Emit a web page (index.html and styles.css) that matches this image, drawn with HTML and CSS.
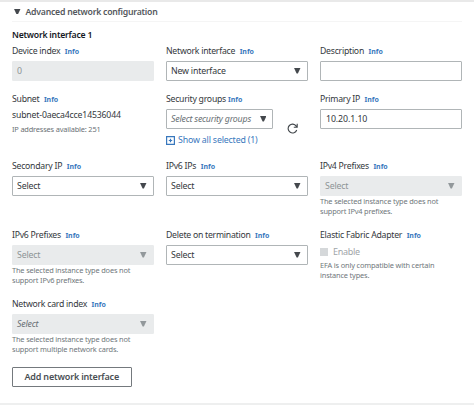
FILE: index.html
```html
<!DOCTYPE html>
<html lang="en">
<head>
<meta charset="utf-8">
<title>Advanced network configuration</title>
<link rel="stylesheet" href="styles.css">
</head>
<body>
<main class="panel">
  <header class="panel-header"><svg class="caret" viewBox="0 0 7 6"><path d="M0 0H7L4.2 6H2.8Z"/></svg><h2>Advanced network configuration</h2></header>
  <h3>Network interface 1</h3>
  <section class="grid">
    <div class="field">
      <div class="label"><span>Device index</span><a class="info">Info</a></div>
      <div class="control disabled"><span>0</span></div>
    </div>
    <div class="field">
      <div class="label"><span>Network interface</span><a class="info">Info</a></div>
      <div class="control"><span>New interface</span><svg class="caret" viewBox="0 0 7 6"><path d="M0 0H7L4.2 6H2.8Z"/></svg></div>
    </div>
    <div class="field">
      <div class="label"><span>Description</span><a class="info">Info</a></div>
      <div class="control"></div>
    </div>

    <div class="field">
      <div class="label"><span>Subnet</span><a class="info">Info</a></div>
      <div class="subnet">subnet-0aeca4cce14536044</div>
      <div class="available">IP addresses available: 251</div>
    </div>
    <div class="field">
      <div class="label tight"><span>Security groups</span><a class="info">Info</a></div>
      <div class="groups">
        <div>
          <div class="control short"><span class="placeholder">Select security groups</span><svg class="caret" viewBox="0 0 7 6"><path d="M0 0H7L4.2 6H2.8Z"/></svg></div>
          <a class="show"><svg viewBox="0 0 9 9"><path d="M.6 .6H8.4V8.4H.6ZM4.5 2.8V6.2M2.8 4.5H6.2"/></svg><span>Show all selected (1)</span></a>
        </div>
        <svg class="refresh" viewBox="0 0 11 11"><path d="M9.7 7A4.4 4.4 0 1 1 9.2 3.1L9.9 4.2M10.2 .8V4.3H6.8"/></svg>
      </div>
    </div>
    <div class="field">
      <div class="label"><span>Primary IP</span><a class="info">Info</a></div>
      <div class="control number"><span>10.20.1.10</span></div>
    </div>

    <div class="field">
      <div class="label"><span>Secondary IP</span><a class="info">Info</a></div>
      <div class="control"><span>Select</span><svg class="caret" viewBox="0 0 7 6"><path d="M0 0H7L4.2 6H2.8Z"/></svg></div>
    </div>
    <div class="field">
      <div class="label"><span>IPv6 IPs</span><a class="info">Info</a></div>
      <div class="control"><span>Select</span><svg class="caret" viewBox="0 0 7 6"><path d="M0 0H7L4.2 6H2.8Z"/></svg></div>
    </div>
    <div class="field">
      <div class="label"><span>IPv4 Prefixes</span><a class="info">Info</a></div>
      <div class="control disabled"><span>Select</span><svg class="caret" viewBox="0 0 7 6"><path d="M0 0H7L4.2 6H2.8Z"/></svg></div>
      <p class="hint">The selected instance type does not<br>support IPv4 prefixes.</p>
    </div>

    <div class="field">
      <div class="label"><span>IPv6 Prefixes</span><a class="info">Info</a></div>
      <div class="control disabled"><span>Select</span><svg class="caret" viewBox="0 0 7 6"><path d="M0 0H7L4.2 6H2.8Z"/></svg></div>
      <p class="hint">The selected instance type does not<br>support IPv6 prefixes.</p>
    </div>
    <div class="field">
      <div class="label"><span>Delete on termination</span><a class="info">Info</a></div>
      <div class="control"><span>Select</span><svg class="caret" viewBox="0 0 7 6"><path d="M0 0H7L4.2 6H2.8Z"/></svg></div>
    </div>
    <div class="field">
      <div class="label"><span>Elastic Fabric Adapter</span><a class="info">Info</a></div>
      <div class="check"><i></i><span>Enable</span></div>
      <p class="hint">EFA is only compatible with certain<br>instance types.</p>
    </div>

    <div class="field">
      <div class="label"><span>Network card index</span><a class="info">Info</a></div>
      <div class="control disabled"><span class="placeholder">Select</span><svg class="caret" viewBox="0 0 7 6"><path d="M0 0H7L4.2 6H2.8Z"/></svg></div>
      <p class="hint">The selected instance type does not<br>support multiple network cards.</p>
    </div>
  </section>
  <button class="add">Add network interface</button>
</main>
</body>
</html>
```
FILE: styles.css
```css
* { box-sizing: border-box; }
body {
  margin: 0;
  background: #fff;
  color: #34383c;
  font: 9px/14px "Noto Sans", "Open Sans", sans-serif;
}
.panel {
  height: 405px;
  padding: 0 12px;
  border-top: 2px solid #e9e9e9;
  border-bottom: 2px solid #eeefef;
}
.panel-header {
  display: flex;
  align-items: center;
  height: 20px;
  padding-left: 2px;
  border-bottom: 1px solid #f5f5f5;
}
h2, h3 { margin: 0; white-space: nowrap; font-weight: 600; }
h2 { margin-left: 5px; font-size: 8.7px; letter-spacing: -.24px; color: #54585d; }
h3 { margin-top: 6px; height: 16px; line-height: 15px; font-size: 8.7px; letter-spacing: -.23px; color: #16191f; }
.caret { flex: none; width: 6.5px; height: 5.5px; fill: #44484d; }
.grid {
  display: grid;
  grid-template-columns: repeat(3, 141.5px);
  grid-template-rows: 48px 67px 69px 69px 70px;
  column-gap: 12.5px;
}
.field { white-space: nowrap; }
.label { display: flex; align-items: center; gap: 4.5px; height: 14px; margin-bottom: 3px; }
.label.tight { gap: 2px; }
.label span { font-size: 8.7px; letter-spacing: -.25px; }
.info { padding-top: 1px; font-size: 7px; font-weight: 700; color: #3978bd; }
.control {
  display: flex;
  align-items: center;
  justify-content: space-between;
  height: 20px;
  padding: 0 6px 0 4px;
  border: 1px solid #b0b5b7;
  border-radius: 1px;
  font-size: 8.8px;
  letter-spacing: -.2px;
}
.number { padding-left: 5px; letter-spacing: -.1px; }
.disabled { border-color: #e9ebec; background: #e9ebec; color: #8d9496; }
.disabled .caret { fill: #92989b; }
.placeholder { font-style: italic; color: #686f74; }
.groups { display: flex; align-items: center; }
.short { width: 107px; }
.subnet { margin-top: -1px; font-size: 8.7px; letter-spacing: -.17px; }
.available { font-size: 7.4px; letter-spacing: -.17px; color: #6b7175; }
.show { display: flex; align-items: center; gap: 3px; margin-top: 4px; color: #3978bd; font-size: 8.8px; letter-spacing: -.17px; }
.show svg { width: 9px; height: 9px; fill: none; stroke: #3978bd; stroke-width: 1.2; }
.refresh { width: 11px; height: 11px; margin-left: 14px; fill: none; stroke: #42474b; stroke-width: 1.1; }
.hint { margin: 0; color: #70777b; font-size: 7.4px; line-height: 10px; letter-spacing: -.16px; }
.check { display: flex; align-items: center; gap: 5px; height: 14px; margin: 2px 0 1px; color: #a0a5a8; letter-spacing: -.3px; }
.check i { width: 8px; height: 8px; background: #d5d8da; }
.add {
  display: block;
  width: 119.5px;
  height: 20px;
  margin: 0;
  padding: 0;
  border: 1px solid #74797d;
  border-radius: 1px;
  background: #fff;
  color: #4a4f54;
  font: 600 9px/18px "Noto Sans", sans-serif;
  letter-spacing: -.18px;
}
```
